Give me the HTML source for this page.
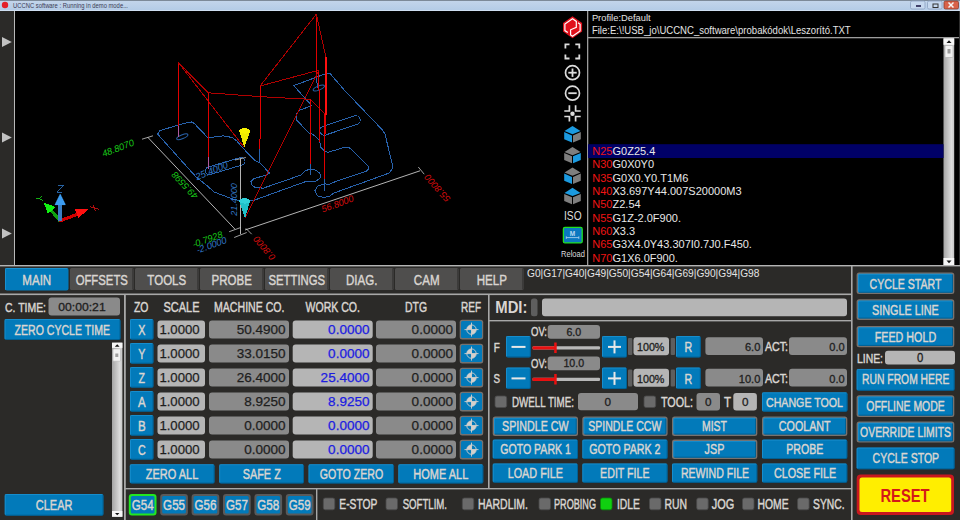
<!DOCTYPE html><html><head><meta charset="utf-8"><style>html,body{margin:0;padding:0;width:960px;height:520px;overflow:hidden;background:#2b2a28}svg{display:block}</style></head><body><svg width="960" height="520" viewBox="0 0 960 520" font-family="&quot;Liberation Sans&quot;, sans-serif" shape-rendering="auto">
<rect x="0.00" y="0.00" width="960.00" height="520.00" rx="0.00" fill="#2b2a28"/>
<defs><linearGradient id="tb" x1="0" y1="0" x2="0" y2="1"><stop offset="0" stop-color="#c4d6ec"/><stop offset="1" stop-color="#b3cbe6"/></linearGradient><linearGradient id="sb" x1="0" y1="0" x2="1" y2="0"><stop offset="0" stop-color="#a4a4a4"/><stop offset=".75" stop-color="#dcdcdc"/><stop offset="1" stop-color="#c4c4c4"/></linearGradient></defs>
<rect x="0.00" y="0.00" width="960.00" height="11.00" rx="0.00" fill="url(#tb)"/>
<rect x="0.00" y="0.00" width="960.00" height="1.00" rx="0.00" fill="#7d8a99"/>
<rect x="0.00" y="10.00" width="960.00" height="1.00" rx="0.00" fill="#cfdff2"/>
<circle cx="5" cy="5" r="3.2" fill="#e32029"/>
<text x="13.00" y="7.90" font-size="7.27" font-weight="normal" fill="#3b3b55" textLength="115.00" lengthAdjust="spacingAndGlyphs">UCCNC software : Running in demo mode...</text>
<rect x="910.50" y="1.00" width="14.50" height="8.00" rx="1.50" fill="#c6d8ee" stroke="#8aa0bf" stroke-width=".8"/>
<rect x="927.50" y="1.00" width="14.50" height="8.00" rx="1.50" fill="#c6d8ee" stroke="#8aa0bf" stroke-width=".8"/>
<rect x="916.00" y="5.00" width="5.00" height="2.00" rx="0.00" fill="#40406a"/>
<rect x="933.00" y="4.00" width="5.00" height="3.50" rx="0.00" fill="none" stroke="#333" stroke-width="1"/>
<rect x="944.00" y="1.00" width="14.50" height="8.00" rx="1.50" fill="#d9624a" stroke="#8a3a2a" stroke-width=".8"/>
<line x1="948.50" y1="2.50" x2="953.50" y2="7.50" stroke="#f4f4f4" stroke-width="1.50"/>
<line x1="953.50" y1="2.50" x2="948.50" y2="7.50" stroke="#f4f4f4" stroke-width="1.50"/>
<rect x="0.00" y="11.00" width="14.00" height="254.00" rx="0.00" fill="#2b2a28"/>
<rect x="15.00" y="11.00" width="945.00" height="254.00" rx="0.00" fill="#000"/>
<rect x="14.00" y="11.00" width="1.00" height="254.00" rx="0.00" fill="#b8b8b8"/>
<path d="M2 37.0L11.8 42.0L2 47.0Z" fill="#c2c2c2"/>
<path d="M2 132.5L11.8 137.5L2 142.5Z" fill="#c2c2c2"/>
<path d="M2 228.5L11.8 233.5L2 238.5Z" fill="#c2c2c2"/>
<rect x="587.00" y="11.00" width="1.30" height="254.00" rx="0.00" fill="#9c9c9c"/>
<rect x="588.00" y="37.00" width="371.00" height="1.30" rx="0.00" fill="#9c9c9c"/>
<rect x="959.00" y="11.00" width="1.00" height="254.00" rx="0.00" fill="#2e2e2e"/>
<rect x="0.00" y="265.00" width="960.00" height="1.40" rx="0.00" fill="#b4b4b4"/>
<rect x="0.00" y="293.50" width="851.00" height="1.60" rx="0.00" fill="#a8a8a8"/>
<rect x="851.00" y="266.00" width="1.60" height="254.00" rx="0.00" fill="#a8a8a8"/>
<rect x="124.00" y="295.00" width="1.80" height="225.00" rx="0.00" fill="#a8a8a8"/>
<rect x="488.00" y="295.00" width="1.60" height="194.00" rx="0.00" fill="#a8a8a8"/>
<rect x="489.00" y="320.00" width="362.00" height="1.40" rx="0.00" fill="#a8a8a8"/>
<rect x="125.00" y="488.00" width="726.00" height="1.40" rx="0.00" fill="#a8a8a8"/>
<rect x="316.00" y="489.00" width="1.40" height="31.00" rx="0.00" fill="#a8a8a8"/>
<rect x="5.00" y="268.00" width="63.50" height="22.50" rx="2.00" fill="#027aba"/>
<path d="M5.50 290V268.5H67.50" stroke="#2aa0e0" stroke-width="1" fill="none" opacity=".6"/>
<text x="22.28" y="284.80" font-size="15.41" font-weight="normal" fill="#d9d5d1" textLength="28.93" lengthAdjust="spacingAndGlyphs" stroke="#d9d5d1" stroke-width=".45">MAIN</text>
<rect x="70.00" y="268.00" width="63.50" height="22.00" rx="1.50" fill="#4f4e4d"/>
<rect x="132.00" y="268.50" width="1.50" height="21.00" rx="0.00" fill="#3c3b3a"/>
<text x="75.65" y="284.80" font-size="15.41" font-weight="normal" fill="#d9d5d1" textLength="52.22" lengthAdjust="spacingAndGlyphs" stroke="#d9d5d1" stroke-width=".45">OFFSETS</text>
<rect x="135.00" y="268.00" width="63.50" height="22.00" rx="1.50" fill="#4f4e4d"/>
<rect x="197.00" y="268.50" width="1.50" height="21.00" rx="0.00" fill="#3c3b3a"/>
<text x="147.36" y="284.80" font-size="15.41" font-weight="normal" fill="#d9d5d1" textLength="38.80" lengthAdjust="spacingAndGlyphs" stroke="#d9d5d1" stroke-width=".45">TOOLS</text>
<rect x="200.00" y="268.00" width="63.50" height="22.00" rx="1.50" fill="#4f4e4d"/>
<rect x="262.00" y="268.50" width="1.50" height="21.00" rx="0.00" fill="#3c3b3a"/>
<text x="211.62" y="284.80" font-size="15.41" font-weight="normal" fill="#d9d5d1" textLength="40.27" lengthAdjust="spacingAndGlyphs" stroke="#d9d5d1" stroke-width=".45">PROBE</text>
<rect x="265.00" y="268.00" width="63.50" height="22.00" rx="1.50" fill="#4f4e4d"/>
<rect x="327.00" y="268.50" width="1.50" height="21.00" rx="0.00" fill="#3c3b3a"/>
<text x="268.44" y="284.80" font-size="15.41" font-weight="normal" fill="#d9d5d1" textLength="56.63" lengthAdjust="spacingAndGlyphs" stroke="#d9d5d1" stroke-width=".45">SETTINGS</text>
<rect x="330.00" y="268.00" width="63.50" height="22.00" rx="1.50" fill="#4f4e4d"/>
<rect x="392.00" y="268.50" width="1.50" height="21.00" rx="0.00" fill="#3c3b3a"/>
<text x="346.01" y="284.80" font-size="15.41" font-weight="normal" fill="#d9d5d1" textLength="31.45" lengthAdjust="spacingAndGlyphs" stroke="#d9d5d1" stroke-width=".45">DIAG.</text>
<rect x="395.00" y="268.00" width="63.50" height="22.00" rx="1.50" fill="#4f4e4d"/>
<rect x="457.00" y="268.50" width="1.50" height="21.00" rx="0.00" fill="#3c3b3a"/>
<text x="413.87" y="284.80" font-size="15.41" font-weight="normal" fill="#d9d5d1" textLength="25.79" lengthAdjust="spacingAndGlyphs" stroke="#d9d5d1" stroke-width=".45">CAM</text>
<rect x="460.00" y="268.00" width="63.50" height="22.00" rx="1.50" fill="#4f4e4d"/>
<rect x="522.00" y="268.50" width="1.50" height="21.00" rx="0.00" fill="#3c3b3a"/>
<text x="476.66" y="284.80" font-size="15.41" font-weight="normal" fill="#d9d5d1" textLength="30.21" lengthAdjust="spacingAndGlyphs" stroke="#d9d5d1" stroke-width=".45">HELP</text>
<text x="527.00" y="276.80" font-size="10.17" font-weight="normal" fill="#e4e4e4" textLength="232.38" lengthAdjust="spacingAndGlyphs">G0|G17|G40|G49|G50|G54|G64|G69|G90|G94|G98</text>
<text x="5.00" y="311.50" font-size="13.08" font-weight="normal" fill="#d9d5d1" textLength="41.01" lengthAdjust="spacingAndGlyphs" stroke="#d9d5d1" stroke-width=".45">C. TIME:</text>
<rect x="48.50" y="297.50" width="71.50" height="18.00" rx="3.00" fill="#8a8a8a"/>
<text x="58.30" y="310.80" font-size="11.63" font-weight="normal" fill="#1e1e1e" textLength="47.37" lengthAdjust="spacingAndGlyphs" stroke="#1e1e1e" stroke-width=".3">00:00:21</text>
<rect x="4.50" y="319.00" width="116.00" height="21.00" rx="2.00" fill="#027aba"/>
<path d="M5.00 339.00V319.50H119.50" stroke="#2aa0e0" stroke-width="1" fill="none" opacity=".5"/>
<path d="M5.50 339.50H120.00V320.00" stroke="#01507c" stroke-width="1" fill="none" opacity=".6"/>
<text x="14.60" y="334.50" font-size="13.81" font-weight="normal" fill="#d9d5d1" textLength="95.39" lengthAdjust="spacingAndGlyphs" stroke="#d9d5d1" stroke-width=".45">ZERO CYCLE TIME</text>
<rect x="112.00" y="342.70" width="10.40" height="174.00" rx="0.00" fill="url(#sb)"/>
<rect x="112.00" y="342.70" width="10.40" height="5.20" rx="0.00" fill="#f6f6f6"/>
<path d="M114.8 346.8L117.2 344.3L119.6 346.8Z" fill="#111"/>
<rect x="113.00" y="348.90" width="7.60" height="12.30" rx="0.80" fill="#f2f2f2" stroke="#b4b4b4" stroke-width=".6"/>
<rect x="115.30" y="353.50" width="3.00" height="3.50" rx="0.00" fill="#a0a0a0"/>
<rect x="112.00" y="511.00" width="10.40" height="5.80" rx="0.00" fill="#f6f6f6"/>
<path d="M115 513L117.2 515.3L119.4 513Z" fill="#111"/>
<rect x="4.70" y="494.00" width="98.80" height="21.70" rx="2.00" fill="#027aba"/>
<path d="M5.20 514.70V494.50H102.50" stroke="#2aa0e0" stroke-width="1" fill="none" opacity=".5"/>
<path d="M5.70 515.20H103.00V495.00" stroke="#01507c" stroke-width="1" fill="none" opacity=".6"/>
<text x="35.79" y="510.40" font-size="13.81" font-weight="normal" fill="#d9d5d1" textLength="36.62" lengthAdjust="spacingAndGlyphs" stroke="#d9d5d1" stroke-width=".45">CLEAR</text>
<text x="134.00" y="312.00" font-size="13.81" font-weight="normal" fill="#d9d5d1" textLength="14.49" lengthAdjust="spacingAndGlyphs" stroke="#d9d5d1" stroke-width=".45">ZO</text>
<text x="163.50" y="312.00" font-size="13.81" font-weight="normal" fill="#d9d5d1" textLength="35.99" lengthAdjust="spacingAndGlyphs" stroke="#d9d5d1" stroke-width=".45">SCALE</text>
<text x="214.00" y="312.00" font-size="13.81" font-weight="normal" fill="#d9d5d1" textLength="70.52" lengthAdjust="spacingAndGlyphs" stroke="#d9d5d1" stroke-width=".45">MACHINE CO.</text>
<text x="305.50" y="312.00" font-size="13.81" font-weight="normal" fill="#d9d5d1" textLength="54.52" lengthAdjust="spacingAndGlyphs" stroke="#d9d5d1" stroke-width=".45">WORK CO.</text>
<text x="405.00" y="312.00" font-size="13.81" font-weight="normal" fill="#d9d5d1" textLength="22.01" lengthAdjust="spacingAndGlyphs" stroke="#d9d5d1" stroke-width=".45">DTG</text>
<text x="461.00" y="312.00" font-size="13.81" font-weight="normal" fill="#d9d5d1" textLength="20.00" lengthAdjust="spacingAndGlyphs" stroke="#d9d5d1" stroke-width=".45">REF</text>
<rect x="130.00" y="319.00" width="23.50" height="20.70" rx="2.00" fill="#027aba"/>
<path d="M130.50 338.70V319.50H152.50" stroke="#2aa0e0" stroke-width="1" fill="none" opacity=".5"/>
<path d="M131.00 339.20H153.00V320.00" stroke="#01507c" stroke-width="1" fill="none" opacity=".6"/>
<text x="138.21" y="334.90" font-size="13.81" font-weight="normal" fill="#d9d5d1" textLength="7.09" lengthAdjust="spacingAndGlyphs" stroke="#d9d5d1" stroke-width=".45">X</text>
<rect x="157.50" y="320.50" width="47.50" height="18.00" rx="3.00" fill="#b5b5b5"/>
<text x="159.40" y="334.30" font-size="13.08" font-weight="normal" fill="#1e1e1e" textLength="40.28" lengthAdjust="spacingAndGlyphs" stroke="#1e1e1e" stroke-width=".25">1.0000</text>
<rect x="209.00" y="320.50" width="80.00" height="18.00" rx="3.00" fill="#8a8a8a"/>
<text x="236.73" y="334.30" font-size="13.08" font-weight="normal" fill="#1e1e1e" textLength="48.86" lengthAdjust="spacingAndGlyphs" stroke="#1e1e1e" stroke-width=".25">50.4900</text>
<rect x="292.70" y="320.50" width="80.00" height="18.00" rx="3.00" fill="#b5b5b5"/>
<text x="328.14" y="334.30" font-size="13.08" font-weight="normal" fill="#1c1ce0" textLength="41.35" lengthAdjust="spacingAndGlyphs" stroke="#1c1ce0" stroke-width=".25">0.0000</text>
<rect x="376.00" y="320.50" width="80.00" height="18.00" rx="3.00" fill="#8a8a8a"/>
<text x="411.64" y="334.30" font-size="13.08" font-weight="normal" fill="#1e1e1e" textLength="41.35" lengthAdjust="spacingAndGlyphs" stroke="#1e1e1e" stroke-width=".25">0.0000</text>
<rect x="459.70" y="319.70" width="23.50" height="19.70" rx="2.50" fill="#747270"/>
<rect x="461.00" y="321.00" width="21.00" height="17.00" rx="1.50" fill="#027aba"/>
<circle cx="471.5" cy="329.6" r="4.7" fill="none" stroke="#d4d0cc" stroke-width=".9"/>
<path d="M471.5 329.6h4.7a4.7 4.7 0 0 1 -4.7 4.7z M471.5 329.6h-4.7a4.7 4.7 0 0 1 4.7 -4.7z" fill="#d4d0cc"/>
<line x1="464.50" y1="329.60" x2="478.50" y2="329.60" stroke="#d4d0cc" stroke-width="0.90"/>
<line x1="471.50" y1="322.60" x2="471.50" y2="336.60" stroke="#d4d0cc" stroke-width="0.90"/>
<rect x="130.00" y="343.00" width="23.50" height="20.70" rx="2.00" fill="#027aba"/>
<path d="M130.50 362.70V343.50H152.50" stroke="#2aa0e0" stroke-width="1" fill="none" opacity=".5"/>
<path d="M131.00 363.20H153.00V344.00" stroke="#01507c" stroke-width="1" fill="none" opacity=".6"/>
<text x="138.21" y="358.90" font-size="13.81" font-weight="normal" fill="#d9d5d1" textLength="7.09" lengthAdjust="spacingAndGlyphs" stroke="#d9d5d1" stroke-width=".45">Y</text>
<rect x="157.50" y="344.50" width="47.50" height="18.00" rx="3.00" fill="#b5b5b5"/>
<text x="159.40" y="358.30" font-size="13.08" font-weight="normal" fill="#1e1e1e" textLength="40.28" lengthAdjust="spacingAndGlyphs" stroke="#1e1e1e" stroke-width=".25">1.0000</text>
<rect x="209.00" y="344.50" width="80.00" height="18.00" rx="3.00" fill="#8a8a8a"/>
<text x="236.73" y="358.30" font-size="13.08" font-weight="normal" fill="#1e1e1e" textLength="48.86" lengthAdjust="spacingAndGlyphs" stroke="#1e1e1e" stroke-width=".25">33.0150</text>
<rect x="292.70" y="344.50" width="80.00" height="18.00" rx="3.00" fill="#b5b5b5"/>
<text x="328.14" y="358.30" font-size="13.08" font-weight="normal" fill="#1c1ce0" textLength="41.35" lengthAdjust="spacingAndGlyphs" stroke="#1c1ce0" stroke-width=".25">0.0000</text>
<rect x="376.00" y="344.50" width="80.00" height="18.00" rx="3.00" fill="#8a8a8a"/>
<text x="411.64" y="358.30" font-size="13.08" font-weight="normal" fill="#1e1e1e" textLength="41.35" lengthAdjust="spacingAndGlyphs" stroke="#1e1e1e" stroke-width=".25">0.0000</text>
<rect x="459.70" y="343.70" width="23.50" height="19.70" rx="2.50" fill="#747270"/>
<rect x="461.00" y="345.00" width="21.00" height="17.00" rx="1.50" fill="#027aba"/>
<circle cx="471.5" cy="353.6" r="4.7" fill="none" stroke="#d4d0cc" stroke-width=".9"/>
<path d="M471.5 353.6h4.7a4.7 4.7 0 0 1 -4.7 4.7z M471.5 353.6h-4.7a4.7 4.7 0 0 1 4.7 -4.7z" fill="#d4d0cc"/>
<line x1="464.50" y1="353.60" x2="478.50" y2="353.60" stroke="#d4d0cc" stroke-width="0.90"/>
<line x1="471.50" y1="346.60" x2="471.50" y2="360.60" stroke="#d4d0cc" stroke-width="0.90"/>
<rect x="130.00" y="367.00" width="23.50" height="20.70" rx="2.00" fill="#027aba"/>
<path d="M130.50 386.70V367.50H152.50" stroke="#2aa0e0" stroke-width="1" fill="none" opacity=".5"/>
<path d="M131.00 387.20H153.00V368.00" stroke="#01507c" stroke-width="1" fill="none" opacity=".6"/>
<text x="138.51" y="382.90" font-size="13.81" font-weight="normal" fill="#d9d5d1" textLength="6.49" lengthAdjust="spacingAndGlyphs" stroke="#d9d5d1" stroke-width=".45">Z</text>
<rect x="157.50" y="368.50" width="47.50" height="18.00" rx="3.00" fill="#b5b5b5"/>
<text x="159.40" y="382.30" font-size="13.08" font-weight="normal" fill="#1e1e1e" textLength="40.28" lengthAdjust="spacingAndGlyphs" stroke="#1e1e1e" stroke-width=".25">1.0000</text>
<rect x="209.00" y="368.50" width="80.00" height="18.00" rx="3.00" fill="#8a8a8a"/>
<text x="236.73" y="382.30" font-size="13.08" font-weight="normal" fill="#1e1e1e" textLength="48.86" lengthAdjust="spacingAndGlyphs" stroke="#1e1e1e" stroke-width=".25">26.4000</text>
<rect x="292.70" y="368.50" width="80.00" height="18.00" rx="3.00" fill="#b5b5b5"/>
<text x="320.63" y="382.30" font-size="13.08" font-weight="normal" fill="#1c1ce0" textLength="48.86" lengthAdjust="spacingAndGlyphs" stroke="#1c1ce0" stroke-width=".25">25.4000</text>
<rect x="376.00" y="368.50" width="80.00" height="18.00" rx="3.00" fill="#8a8a8a"/>
<text x="411.64" y="382.30" font-size="13.08" font-weight="normal" fill="#1e1e1e" textLength="41.35" lengthAdjust="spacingAndGlyphs" stroke="#1e1e1e" stroke-width=".25">0.0000</text>
<rect x="459.70" y="367.70" width="23.50" height="19.70" rx="2.50" fill="#747270"/>
<rect x="461.00" y="369.00" width="21.00" height="17.00" rx="1.50" fill="#027aba"/>
<circle cx="471.5" cy="377.6" r="4.7" fill="none" stroke="#d4d0cc" stroke-width=".9"/>
<path d="M471.5 377.6h4.7a4.7 4.7 0 0 1 -4.7 4.7z M471.5 377.6h-4.7a4.7 4.7 0 0 1 4.7 -4.7z" fill="#d4d0cc"/>
<line x1="464.50" y1="377.60" x2="478.50" y2="377.60" stroke="#d4d0cc" stroke-width="0.90"/>
<line x1="471.50" y1="370.60" x2="471.50" y2="384.60" stroke="#d4d0cc" stroke-width="0.90"/>
<rect x="130.00" y="391.00" width="23.50" height="20.70" rx="2.00" fill="#027aba"/>
<path d="M130.50 410.70V391.50H152.50" stroke="#2aa0e0" stroke-width="1" fill="none" opacity=".5"/>
<path d="M131.00 411.20H153.00V392.00" stroke="#01507c" stroke-width="1" fill="none" opacity=".6"/>
<text x="137.92" y="406.90" font-size="13.81" font-weight="normal" fill="#d9d5d1" textLength="7.62" lengthAdjust="spacingAndGlyphs" stroke="#d9d5d1" stroke-width=".45">A</text>
<rect x="157.50" y="392.50" width="47.50" height="18.00" rx="3.00" fill="#b5b5b5"/>
<text x="159.40" y="406.30" font-size="13.08" font-weight="normal" fill="#1e1e1e" textLength="40.28" lengthAdjust="spacingAndGlyphs" stroke="#1e1e1e" stroke-width=".25">1.0000</text>
<rect x="209.00" y="392.50" width="80.00" height="18.00" rx="3.00" fill="#8a8a8a"/>
<text x="244.24" y="406.30" font-size="13.08" font-weight="normal" fill="#1e1e1e" textLength="41.35" lengthAdjust="spacingAndGlyphs" stroke="#1e1e1e" stroke-width=".25">8.9250</text>
<rect x="292.70" y="392.50" width="80.00" height="18.00" rx="3.00" fill="#b5b5b5"/>
<text x="328.14" y="406.30" font-size="13.08" font-weight="normal" fill="#1c1ce0" textLength="41.35" lengthAdjust="spacingAndGlyphs" stroke="#1c1ce0" stroke-width=".25">8.9250</text>
<rect x="376.00" y="392.50" width="80.00" height="18.00" rx="3.00" fill="#8a8a8a"/>
<text x="411.64" y="406.30" font-size="13.08" font-weight="normal" fill="#1e1e1e" textLength="41.35" lengthAdjust="spacingAndGlyphs" stroke="#1e1e1e" stroke-width=".25">0.0000</text>
<rect x="459.70" y="391.70" width="23.50" height="19.70" rx="2.50" fill="#747270"/>
<rect x="461.00" y="393.00" width="21.00" height="17.00" rx="1.50" fill="#027aba"/>
<circle cx="471.5" cy="401.6" r="4.7" fill="none" stroke="#d4d0cc" stroke-width=".9"/>
<path d="M471.5 401.6h4.7a4.7 4.7 0 0 1 -4.7 4.7z M471.5 401.6h-4.7a4.7 4.7 0 0 1 4.7 -4.7z" fill="#d4d0cc"/>
<line x1="464.50" y1="401.60" x2="478.50" y2="401.60" stroke="#d4d0cc" stroke-width="0.90"/>
<line x1="471.50" y1="394.60" x2="471.50" y2="408.60" stroke="#d4d0cc" stroke-width="0.90"/>
<rect x="130.00" y="415.00" width="23.50" height="20.70" rx="2.00" fill="#027aba"/>
<path d="M130.50 434.70V415.50H152.50" stroke="#2aa0e0" stroke-width="1" fill="none" opacity=".5"/>
<path d="M131.00 435.20H153.00V416.00" stroke="#01507c" stroke-width="1" fill="none" opacity=".6"/>
<text x="137.92" y="430.90" font-size="13.81" font-weight="normal" fill="#d9d5d1" textLength="7.68" lengthAdjust="spacingAndGlyphs" stroke="#d9d5d1" stroke-width=".45">B</text>
<rect x="157.50" y="416.50" width="47.50" height="18.00" rx="3.00" fill="#b5b5b5"/>
<text x="159.40" y="430.30" font-size="13.08" font-weight="normal" fill="#1e1e1e" textLength="40.28" lengthAdjust="spacingAndGlyphs" stroke="#1e1e1e" stroke-width=".25">1.0000</text>
<rect x="209.00" y="416.50" width="80.00" height="18.00" rx="3.00" fill="#8a8a8a"/>
<text x="244.24" y="430.30" font-size="13.08" font-weight="normal" fill="#1e1e1e" textLength="41.35" lengthAdjust="spacingAndGlyphs" stroke="#1e1e1e" stroke-width=".25">0.0000</text>
<rect x="292.70" y="416.50" width="80.00" height="18.00" rx="3.00" fill="#b5b5b5"/>
<text x="328.14" y="430.30" font-size="13.08" font-weight="normal" fill="#1c1ce0" textLength="41.35" lengthAdjust="spacingAndGlyphs" stroke="#1c1ce0" stroke-width=".25">0.0000</text>
<rect x="376.00" y="416.50" width="80.00" height="18.00" rx="3.00" fill="#8a8a8a"/>
<text x="411.64" y="430.30" font-size="13.08" font-weight="normal" fill="#1e1e1e" textLength="41.35" lengthAdjust="spacingAndGlyphs" stroke="#1e1e1e" stroke-width=".25">0.0000</text>
<rect x="459.70" y="415.70" width="23.50" height="19.70" rx="2.50" fill="#747270"/>
<rect x="461.00" y="417.00" width="21.00" height="17.00" rx="1.50" fill="#027aba"/>
<circle cx="471.5" cy="425.6" r="4.7" fill="none" stroke="#d4d0cc" stroke-width=".9"/>
<path d="M471.5 425.6h4.7a4.7 4.7 0 0 1 -4.7 4.7z M471.5 425.6h-4.7a4.7 4.7 0 0 1 4.7 -4.7z" fill="#d4d0cc"/>
<line x1="464.50" y1="425.60" x2="478.50" y2="425.60" stroke="#d4d0cc" stroke-width="0.90"/>
<line x1="471.50" y1="418.60" x2="471.50" y2="432.60" stroke="#d4d0cc" stroke-width="0.90"/>
<rect x="130.00" y="439.00" width="23.50" height="20.70" rx="2.00" fill="#027aba"/>
<path d="M130.50 458.70V439.50H152.50" stroke="#2aa0e0" stroke-width="1" fill="none" opacity=".5"/>
<path d="M131.00 459.20H153.00V440.00" stroke="#01507c" stroke-width="1" fill="none" opacity=".6"/>
<text x="137.92" y="454.90" font-size="13.81" font-weight="normal" fill="#d9d5d1" textLength="7.68" lengthAdjust="spacingAndGlyphs" stroke="#d9d5d1" stroke-width=".45">C</text>
<rect x="157.50" y="440.50" width="47.50" height="18.00" rx="3.00" fill="#b5b5b5"/>
<text x="159.40" y="454.30" font-size="13.08" font-weight="normal" fill="#1e1e1e" textLength="40.28" lengthAdjust="spacingAndGlyphs" stroke="#1e1e1e" stroke-width=".25">1.0000</text>
<rect x="209.00" y="440.50" width="80.00" height="18.00" rx="3.00" fill="#8a8a8a"/>
<text x="244.24" y="454.30" font-size="13.08" font-weight="normal" fill="#1e1e1e" textLength="41.35" lengthAdjust="spacingAndGlyphs" stroke="#1e1e1e" stroke-width=".25">0.0000</text>
<rect x="292.70" y="440.50" width="80.00" height="18.00" rx="3.00" fill="#b5b5b5"/>
<text x="328.14" y="454.30" font-size="13.08" font-weight="normal" fill="#1c1ce0" textLength="41.35" lengthAdjust="spacingAndGlyphs" stroke="#1c1ce0" stroke-width=".25">0.0000</text>
<rect x="376.00" y="440.50" width="80.00" height="18.00" rx="3.00" fill="#8a8a8a"/>
<text x="411.64" y="454.30" font-size="13.08" font-weight="normal" fill="#1e1e1e" textLength="41.35" lengthAdjust="spacingAndGlyphs" stroke="#1e1e1e" stroke-width=".25">0.0000</text>
<rect x="459.70" y="439.70" width="23.50" height="19.70" rx="2.50" fill="#747270"/>
<rect x="461.00" y="441.00" width="21.00" height="17.00" rx="1.50" fill="#027aba"/>
<circle cx="471.5" cy="449.6" r="4.7" fill="none" stroke="#d4d0cc" stroke-width=".9"/>
<path d="M471.5 449.6h4.7a4.7 4.7 0 0 1 -4.7 4.7z M471.5 449.6h-4.7a4.7 4.7 0 0 1 4.7 -4.7z" fill="#d4d0cc"/>
<line x1="464.50" y1="449.60" x2="478.50" y2="449.60" stroke="#d4d0cc" stroke-width="0.90"/>
<line x1="471.50" y1="442.60" x2="471.50" y2="456.60" stroke="#d4d0cc" stroke-width="0.90"/>
<rect x="129.80" y="464.20" width="84.80" height="19.40" rx="2.00" fill="#027aba"/>
<path d="M130.30 482.60V464.70H213.60" stroke="#2aa0e0" stroke-width="1" fill="none" opacity=".5"/>
<path d="M130.80 483.10H214.10V465.20" stroke="#01507c" stroke-width="1" fill="none" opacity=".6"/>
<text x="145.80" y="478.90" font-size="13.81" font-weight="normal" fill="#d9d5d1" textLength="52.50" lengthAdjust="spacingAndGlyphs" stroke="#d9d5d1" stroke-width=".45">ZERO ALL</text>
<rect x="219.20" y="464.20" width="84.80" height="19.40" rx="2.00" fill="#027aba"/>
<path d="M219.70 482.60V464.70H303.00" stroke="#2aa0e0" stroke-width="1" fill="none" opacity=".5"/>
<path d="M220.20 483.10H303.50V465.20" stroke="#01507c" stroke-width="1" fill="none" opacity=".6"/>
<text x="242.70" y="478.90" font-size="13.81" font-weight="normal" fill="#d9d5d1" textLength="38.11" lengthAdjust="spacingAndGlyphs" stroke="#d9d5d1" stroke-width=".45">SAFE Z</text>
<rect x="308.50" y="464.20" width="85.50" height="19.40" rx="2.00" fill="#027aba"/>
<path d="M309.00 482.60V464.70H393.00" stroke="#2aa0e0" stroke-width="1" fill="none" opacity=".5"/>
<path d="M309.50 483.10H393.50V465.20" stroke="#01507c" stroke-width="1" fill="none" opacity=".6"/>
<text x="319.80" y="478.90" font-size="13.81" font-weight="normal" fill="#d9d5d1" textLength="63.42" lengthAdjust="spacingAndGlyphs" stroke="#d9d5d1" stroke-width=".45">GOTO ZERO</text>
<rect x="398.30" y="464.20" width="85.00" height="19.40" rx="2.00" fill="#027aba"/>
<path d="M398.80 482.60V464.70H482.30" stroke="#2aa0e0" stroke-width="1" fill="none" opacity=".5"/>
<path d="M399.30 483.10H482.80V465.20" stroke="#01507c" stroke-width="1" fill="none" opacity=".6"/>
<text x="413.30" y="478.90" font-size="13.81" font-weight="normal" fill="#d9d5d1" textLength="55.02" lengthAdjust="spacingAndGlyphs" stroke="#d9d5d1" stroke-width=".45">HOME ALL</text>
<rect x="128.80" y="494.00" width="27.70" height="21.50" rx="3.00" fill="#22e622"/>
<rect x="130.80" y="496.00" width="23.70" height="17.50" rx="1.50" fill="#027aba"/>
<text x="131.71" y="510.00" font-size="14.54" font-weight="normal" fill="#d9d5d1" textLength="21.98" lengthAdjust="spacingAndGlyphs" stroke="#d9d5d1" stroke-width=".45">G54</text>
<rect x="160.20" y="494.00" width="27.70" height="21.50" rx="3.00" fill="#5a5a5a"/>
<rect x="162.20" y="496.00" width="23.70" height="17.50" rx="1.50" fill="#027aba"/>
<text x="163.11" y="510.00" font-size="14.54" font-weight="normal" fill="#d9d5d1" textLength="21.98" lengthAdjust="spacingAndGlyphs" stroke="#d9d5d1" stroke-width=".45">G55</text>
<rect x="191.60" y="494.00" width="27.70" height="21.50" rx="3.00" fill="#5a5a5a"/>
<rect x="193.60" y="496.00" width="23.70" height="17.50" rx="1.50" fill="#027aba"/>
<text x="194.51" y="510.00" font-size="14.54" font-weight="normal" fill="#d9d5d1" textLength="21.98" lengthAdjust="spacingAndGlyphs" stroke="#d9d5d1" stroke-width=".45">G56</text>
<rect x="223.00" y="494.00" width="27.70" height="21.50" rx="3.00" fill="#5a5a5a"/>
<rect x="225.00" y="496.00" width="23.70" height="17.50" rx="1.50" fill="#027aba"/>
<text x="225.91" y="510.00" font-size="14.54" font-weight="normal" fill="#d9d5d1" textLength="21.98" lengthAdjust="spacingAndGlyphs" stroke="#d9d5d1" stroke-width=".45">G57</text>
<rect x="254.40" y="494.00" width="27.70" height="21.50" rx="3.00" fill="#5a5a5a"/>
<rect x="256.40" y="496.00" width="23.70" height="17.50" rx="1.50" fill="#027aba"/>
<text x="257.31" y="510.00" font-size="14.54" font-weight="normal" fill="#d9d5d1" textLength="21.98" lengthAdjust="spacingAndGlyphs" stroke="#d9d5d1" stroke-width=".45">G58</text>
<rect x="285.80" y="494.00" width="27.70" height="21.50" rx="3.00" fill="#5a5a5a"/>
<rect x="287.80" y="496.00" width="23.70" height="17.50" rx="1.50" fill="#027aba"/>
<text x="288.71" y="510.00" font-size="14.54" font-weight="normal" fill="#d9d5d1" textLength="21.98" lengthAdjust="spacingAndGlyphs" stroke="#d9d5d1" stroke-width=".45">G59</text>
<rect x="323.30" y="498.00" width="11.50" height="11.80" rx="2.00" fill="#6a6a6a" stroke="#4a4a4a" stroke-width=".8"/>
<text x="339.30" y="509.00" font-size="13.81" font-weight="normal" fill="#d9d5d1" textLength="38.00" lengthAdjust="spacingAndGlyphs" stroke="#d9d5d1" stroke-width=".45">E-STOP</text>
<rect x="386.00" y="498.00" width="11.50" height="11.80" rx="2.00" fill="#6a6a6a" stroke="#4a4a4a" stroke-width=".8"/>
<text x="402.70" y="509.00" font-size="13.81" font-weight="normal" fill="#d9d5d1" textLength="44.31" lengthAdjust="spacingAndGlyphs" stroke="#d9d5d1" stroke-width=".45">SOFTLIM.</text>
<rect x="462.30" y="498.00" width="11.50" height="11.80" rx="2.00" fill="#6a6a6a" stroke="#4a4a4a" stroke-width=".8"/>
<text x="478.00" y="509.00" font-size="13.81" font-weight="normal" fill="#d9d5d1" textLength="49.98" lengthAdjust="spacingAndGlyphs" stroke="#d9d5d1" stroke-width=".45">HARDLIM.</text>
<rect x="539.00" y="498.00" width="11.50" height="11.80" rx="2.00" fill="#6a6a6a" stroke="#4a4a4a" stroke-width=".8"/>
<text x="554.00" y="509.00" font-size="13.81" font-weight="normal" fill="#d9d5d1" textLength="42.02" lengthAdjust="spacingAndGlyphs" stroke="#d9d5d1" stroke-width=".45">PROBING</text>
<rect x="600.50" y="498.00" width="11.50" height="11.80" rx="2.00" fill="#10d010" stroke="#0a8a0a" stroke-width=".8"/>
<text x="617.00" y="509.00" font-size="13.81" font-weight="normal" fill="#d9d5d1" textLength="22.98" lengthAdjust="spacingAndGlyphs" stroke="#d9d5d1" stroke-width=".45">IDLE</text>
<rect x="649.50" y="498.00" width="11.50" height="11.80" rx="2.00" fill="#6a6a6a" stroke="#4a4a4a" stroke-width=".8"/>
<text x="664.50" y="509.00" font-size="13.81" font-weight="normal" fill="#d9d5d1" textLength="22.52" lengthAdjust="spacingAndGlyphs" stroke="#d9d5d1" stroke-width=".45">RUN</text>
<rect x="696.70" y="498.00" width="11.50" height="11.80" rx="2.00" fill="#6a6a6a" stroke="#4a4a4a" stroke-width=".8"/>
<text x="711.70" y="509.00" font-size="13.81" font-weight="normal" fill="#d9d5d1" textLength="22.51" lengthAdjust="spacingAndGlyphs" stroke="#d9d5d1" stroke-width=".45">JOG</text>
<rect x="742.50" y="498.00" width="11.50" height="11.80" rx="2.00" fill="#6a6a6a" stroke="#4a4a4a" stroke-width=".8"/>
<text x="757.50" y="509.00" font-size="13.81" font-weight="normal" fill="#d9d5d1" textLength="31.10" lengthAdjust="spacingAndGlyphs" stroke="#d9d5d1" stroke-width=".45">HOME</text>
<rect x="797.60" y="498.00" width="11.50" height="11.80" rx="2.00" fill="#6a6a6a" stroke="#4a4a4a" stroke-width=".8"/>
<text x="813.00" y="509.00" font-size="13.81" font-weight="normal" fill="#d9d5d1" textLength="31.51" lengthAdjust="spacingAndGlyphs" stroke="#d9d5d1" stroke-width=".45">SYNC.</text>
<text x="495.30" y="313.00" font-size="15.99" font-weight="bold" fill="#d9d5d1" textLength="32.12" lengthAdjust="spacingAndGlyphs">MDI:</text>
<rect x="531.00" y="298.50" width="6.50" height="17.70" rx="2.50" fill="#5e5e5e"/>
<rect x="542.00" y="298.50" width="305.00" height="17.70" rx="3.00" fill="#b5b5b5"/>
<text x="493.80" y="351.50" font-size="12.21" font-weight="normal" fill="#d9d5d1" textLength="6.01" lengthAdjust="spacingAndGlyphs" stroke="#d9d5d1" stroke-width=".45">F</text>
<text x="531.00" y="336.00" font-size="12.35" font-weight="normal" fill="#d9d5d1" textLength="16.01" lengthAdjust="spacingAndGlyphs" stroke="#d9d5d1" stroke-width=".45">OV:</text>
<rect x="547.70" y="325.00" width="52.30" height="13.80" rx="3.00" fill="#8a8a8a"/>
<text x="566.43" y="335.80" font-size="10.61" font-weight="normal" fill="#1e1e1e" textLength="14.75" lengthAdjust="spacingAndGlyphs" stroke="#1e1e1e" stroke-width=".3">6.0</text>
<rect x="506.00" y="336.00" width="24.80" height="21.40" rx="2.00" fill="#027aba"/>
<path d="M506.50 356.40V336.50H529.80" stroke="#2aa0e0" stroke-width="1" fill="none" opacity=".5"/>
<path d="M507.00 356.90H530.30V337.00" stroke="#01507c" stroke-width="1" fill="none" opacity=".6"/>
<rect x="511.50" y="345.90" width="14.00" height="2.00" rx="0.00" fill="#e8e8e8"/>
<rect x="532.60" y="346.30" width="67.40" height="3.20" rx="1.00" fill="#b8b8b8"/>
<rect x="532.60" y="346.30" width="22.50" height="3.20" rx="0.00" fill="#e81010"/>
<rect x="554.20" y="342.50" width="2.50" height="10.50" rx="0.00" fill="#e81010"/>
<rect x="602.00" y="336.00" width="25.00" height="21.60" rx="2.00" fill="#027aba"/>
<path d="M602.50 356.60V336.50H626.00" stroke="#2aa0e0" stroke-width="1" fill="none" opacity=".5"/>
<path d="M603.00 357.10H626.50V337.00" stroke="#01507c" stroke-width="1" fill="none" opacity=".6"/>
<rect x="608.00" y="345.90" width="13.00" height="2.00" rx="0.00" fill="#e8e8e8"/>
<rect x="613.50" y="340.40" width="2.00" height="13.00" rx="0.00" fill="#e8e8e8"/>
<rect x="628.00" y="338.00" width="4.30" height="17.00" rx="1.00" fill="#5e5e5e"/>
<rect x="633.50" y="337.20" width="35.50" height="18.00" rx="3.00" fill="#b5b5b5"/>
<text x="636.93" y="351.00" font-size="10.76" font-weight="normal" fill="#1e1e1e" textLength="27.51" lengthAdjust="spacingAndGlyphs" stroke="#1e1e1e" stroke-width=".3">100%</text>
<rect x="670.70" y="338.00" width="4.30" height="17.00" rx="1.00" fill="#5e5e5e"/>
<rect x="676.00" y="336.00" width="24.80" height="21.60" rx="2.00" fill="#027aba"/>
<path d="M676.50 356.60V336.50H699.80" stroke="#2aa0e0" stroke-width="1" fill="none" opacity=".5"/>
<path d="M677.00 357.10H700.30V337.00" stroke="#01507c" stroke-width="1" fill="none" opacity=".6"/>
<text x="684.57" y="352.35" font-size="13.81" font-weight="normal" fill="#d9d5d1" textLength="7.68" lengthAdjust="spacingAndGlyphs" stroke="#d9d5d1" stroke-width=".45">R</text>
<rect x="705.40" y="337.20" width="57.60" height="17.80" rx="3.00" fill="#8a8a8a"/>
<text x="744.95" y="351.00" font-size="11.05" font-weight="normal" fill="#1e1e1e" textLength="15.36" lengthAdjust="spacingAndGlyphs" stroke="#1e1e1e" stroke-width=".3">6.0</text>
<text x="765.00" y="351.30" font-size="12.06" font-weight="normal" fill="#d9d5d1" textLength="23.02" lengthAdjust="spacingAndGlyphs" stroke="#d9d5d1" stroke-width=".45">ACT:</text>
<rect x="789.00" y="337.20" width="58.00" height="17.80" rx="3.00" fill="#8a8a8a"/>
<text x="829.35" y="351.00" font-size="11.05" font-weight="normal" fill="#1e1e1e" textLength="15.36" lengthAdjust="spacingAndGlyphs" stroke="#1e1e1e" stroke-width=".3">0.0</text>
<text x="493.50" y="383.00" font-size="12.21" font-weight="normal" fill="#d9d5d1" textLength="6.52" lengthAdjust="spacingAndGlyphs" stroke="#d9d5d1" stroke-width=".45">S</text>
<text x="531.00" y="367.50" font-size="12.35" font-weight="normal" fill="#d9d5d1" textLength="16.01" lengthAdjust="spacingAndGlyphs" stroke="#d9d5d1" stroke-width=".45">OV:</text>
<rect x="547.70" y="356.50" width="52.30" height="13.80" rx="3.00" fill="#8a8a8a"/>
<text x="563.48" y="367.30" font-size="10.61" font-weight="normal" fill="#1e1e1e" textLength="20.65" lengthAdjust="spacingAndGlyphs" stroke="#1e1e1e" stroke-width=".3">10.0</text>
<rect x="506.00" y="367.50" width="24.80" height="21.40" rx="2.00" fill="#027aba"/>
<path d="M506.50 387.90V368.00H529.80" stroke="#2aa0e0" stroke-width="1" fill="none" opacity=".5"/>
<path d="M507.00 388.40H530.30V368.50" stroke="#01507c" stroke-width="1" fill="none" opacity=".6"/>
<rect x="511.50" y="377.40" width="14.00" height="2.00" rx="0.00" fill="#e8e8e8"/>
<rect x="532.60" y="377.80" width="67.40" height="3.20" rx="1.00" fill="#b8b8b8"/>
<rect x="532.60" y="377.80" width="22.50" height="3.20" rx="0.00" fill="#e81010"/>
<rect x="554.20" y="374.00" width="2.50" height="10.50" rx="0.00" fill="#e81010"/>
<rect x="602.00" y="367.50" width="25.00" height="21.60" rx="2.00" fill="#027aba"/>
<path d="M602.50 388.10V368.00H626.00" stroke="#2aa0e0" stroke-width="1" fill="none" opacity=".5"/>
<path d="M603.00 388.60H626.50V368.50" stroke="#01507c" stroke-width="1" fill="none" opacity=".6"/>
<rect x="608.00" y="377.40" width="13.00" height="2.00" rx="0.00" fill="#e8e8e8"/>
<rect x="613.50" y="371.90" width="2.00" height="13.00" rx="0.00" fill="#e8e8e8"/>
<rect x="628.00" y="369.50" width="4.30" height="17.00" rx="1.00" fill="#5e5e5e"/>
<rect x="633.50" y="368.70" width="35.50" height="18.00" rx="3.00" fill="#b5b5b5"/>
<text x="636.93" y="382.50" font-size="10.76" font-weight="normal" fill="#1e1e1e" textLength="27.51" lengthAdjust="spacingAndGlyphs" stroke="#1e1e1e" stroke-width=".3">100%</text>
<rect x="670.70" y="369.50" width="4.30" height="17.00" rx="1.00" fill="#5e5e5e"/>
<rect x="676.00" y="367.50" width="24.80" height="21.60" rx="2.00" fill="#027aba"/>
<path d="M676.50 388.10V368.00H699.80" stroke="#2aa0e0" stroke-width="1" fill="none" opacity=".5"/>
<path d="M677.00 388.60H700.30V368.50" stroke="#01507c" stroke-width="1" fill="none" opacity=".6"/>
<text x="684.57" y="383.85" font-size="13.81" font-weight="normal" fill="#d9d5d1" textLength="7.68" lengthAdjust="spacingAndGlyphs" stroke="#d9d5d1" stroke-width=".45">R</text>
<rect x="705.40" y="368.70" width="57.60" height="17.80" rx="3.00" fill="#8a8a8a"/>
<text x="738.81" y="382.50" font-size="11.05" font-weight="normal" fill="#1e1e1e" textLength="21.50" lengthAdjust="spacingAndGlyphs" stroke="#1e1e1e" stroke-width=".3">10.0</text>
<text x="765.00" y="382.80" font-size="12.06" font-weight="normal" fill="#d9d5d1" textLength="23.02" lengthAdjust="spacingAndGlyphs" stroke="#d9d5d1" stroke-width=".45">ACT:</text>
<rect x="789.00" y="368.70" width="58.00" height="17.80" rx="3.00" fill="#8a8a8a"/>
<text x="829.35" y="382.50" font-size="11.05" font-weight="normal" fill="#1e1e1e" textLength="15.36" lengthAdjust="spacingAndGlyphs" stroke="#1e1e1e" stroke-width=".3">0.0</text>
<rect x="495.00" y="396.00" width="11.70" height="11.50" rx="2.00" fill="#6a6a6a" stroke="#4a4a4a" stroke-width=".8"/>
<text x="512.00" y="407.00" font-size="13.81" font-weight="normal" fill="#d9d5d1" textLength="62.00" lengthAdjust="spacingAndGlyphs" stroke="#d9d5d1" stroke-width=".45">DWELL TIME:</text>
<rect x="578.00" y="393.00" width="60.00" height="17.30" rx="3.00" fill="#8a8a8a"/>
<text x="604.50" y="405.50" font-size="11.63" font-weight="normal" fill="#1e1e1e" textLength="6.51" lengthAdjust="spacingAndGlyphs" stroke="#1e1e1e" stroke-width=".3">0</text>
<rect x="644.00" y="396.00" width="11.70" height="11.50" rx="2.00" fill="#6a6a6a" stroke="#4a4a4a" stroke-width=".8"/>
<text x="661.00" y="407.00" font-size="13.81" font-weight="normal" fill="#d9d5d1" textLength="32.03" lengthAdjust="spacingAndGlyphs" stroke="#d9d5d1" stroke-width=".45">TOOL:</text>
<rect x="696.50" y="393.00" width="23.50" height="17.40" rx="3.00" fill="#8a8a8a"/>
<text x="705.00" y="405.50" font-size="11.63" font-weight="normal" fill="#1e1e1e" textLength="6.51" lengthAdjust="spacingAndGlyphs" stroke="#1e1e1e" stroke-width=".3">0</text>
<text x="724.00" y="407.00" font-size="13.81" font-weight="normal" fill="#d9d5d1" textLength="7.01" lengthAdjust="spacingAndGlyphs" stroke="#d9d5d1" stroke-width=".45">T</text>
<rect x="733.30" y="393.00" width="23.60" height="17.40" rx="3.00" fill="#b5b5b5"/>
<text x="742.00" y="405.50" font-size="11.63" font-weight="normal" fill="#1e1e1e" textLength="6.51" lengthAdjust="spacingAndGlyphs" stroke="#1e1e1e" stroke-width=".3">0</text>
<rect x="762.00" y="392.30" width="85.50" height="19.40" rx="2.00" fill="#027aba"/>
<path d="M762.50 410.70V392.80H846.50" stroke="#2aa0e0" stroke-width="1" fill="none" opacity=".5"/>
<path d="M763.00 411.20H847.00V393.30" stroke="#01507c" stroke-width="1" fill="none" opacity=".6"/>
<text x="766.00" y="406.70" font-size="13.37" font-weight="normal" fill="#d9d5d1" textLength="76.98" lengthAdjust="spacingAndGlyphs" stroke="#d9d5d1" stroke-width=".45">CHANGE TOOL</text>
<rect x="492.70" y="416.50" width="85.30" height="19.40" rx="2.50" fill="#78726e"/>
<rect x="494.00" y="417.80" width="82.70" height="16.80" rx="2.00" fill="#027aba"/>
<path d="M494.50 433.60V418.30H575.70" stroke="#2aa0e0" stroke-width="1" fill="none" opacity=".5"/>
<path d="M495.00 434.10H576.20V418.80" stroke="#01507c" stroke-width="1" fill="none" opacity=".6"/>
<text x="502.10" y="430.80" font-size="13.81" font-weight="normal" fill="#d9d5d1" textLength="66.48" lengthAdjust="spacingAndGlyphs" stroke="#d9d5d1" stroke-width=".45">SPINDLE CW</text>
<rect x="582.30" y="416.50" width="85.30" height="19.40" rx="2.50" fill="#78726e"/>
<rect x="583.60" y="417.80" width="82.70" height="16.80" rx="2.00" fill="#027aba"/>
<path d="M584.10 433.60V418.30H665.30" stroke="#2aa0e0" stroke-width="1" fill="none" opacity=".5"/>
<path d="M584.60 434.10H665.80V418.80" stroke="#01507c" stroke-width="1" fill="none" opacity=".6"/>
<text x="588.30" y="430.80" font-size="13.81" font-weight="normal" fill="#d9d5d1" textLength="73.10" lengthAdjust="spacingAndGlyphs" stroke="#d9d5d1" stroke-width=".45">SPINDLE CCW</text>
<rect x="672.00" y="416.50" width="85.30" height="19.40" rx="2.50" fill="#78726e"/>
<rect x="673.30" y="417.80" width="82.70" height="16.80" rx="2.00" fill="#027aba"/>
<path d="M673.80 433.60V418.30H755.00" stroke="#2aa0e0" stroke-width="1" fill="none" opacity=".5"/>
<path d="M674.30 434.10H755.50V418.80" stroke="#01507c" stroke-width="1" fill="none" opacity=".6"/>
<text x="702.00" y="430.80" font-size="13.81" font-weight="normal" fill="#d9d5d1" textLength="24.99" lengthAdjust="spacingAndGlyphs" stroke="#d9d5d1" stroke-width=".45">MIST</text>
<rect x="762.00" y="416.50" width="85.30" height="19.40" rx="2.50" fill="#78726e"/>
<rect x="763.30" y="417.80" width="82.70" height="16.80" rx="2.00" fill="#027aba"/>
<path d="M763.80 433.60V418.30H845.00" stroke="#2aa0e0" stroke-width="1" fill="none" opacity=".5"/>
<path d="M764.30 434.10H845.50V418.80" stroke="#01507c" stroke-width="1" fill="none" opacity=".6"/>
<text x="778.80" y="430.80" font-size="13.81" font-weight="normal" fill="#d9d5d1" textLength="51.89" lengthAdjust="spacingAndGlyphs" stroke="#d9d5d1" stroke-width=".45">COOLANT</text>
<rect x="492.70" y="439.60" width="85.30" height="19.40" rx="2.00" fill="#027aba"/>
<path d="M493.20 458.00V440.10H577.00" stroke="#2aa0e0" stroke-width="1" fill="none" opacity=".5"/>
<path d="M493.70 458.50H577.50V440.60" stroke="#01507c" stroke-width="1" fill="none" opacity=".6"/>
<text x="500.20" y="453.90" font-size="13.81" font-weight="normal" fill="#d9d5d1" textLength="70.72" lengthAdjust="spacingAndGlyphs" stroke="#d9d5d1" stroke-width=".45">GOTO PARK 1</text>
<rect x="582.30" y="439.60" width="85.30" height="19.40" rx="2.00" fill="#027aba"/>
<path d="M582.80 458.00V440.10H666.60" stroke="#2aa0e0" stroke-width="1" fill="none" opacity=".5"/>
<path d="M583.30 458.50H667.10V440.60" stroke="#01507c" stroke-width="1" fill="none" opacity=".6"/>
<text x="589.25" y="453.90" font-size="13.81" font-weight="normal" fill="#d9d5d1" textLength="71.27" lengthAdjust="spacingAndGlyphs" stroke="#d9d5d1" stroke-width=".45">GOTO PARK 2</text>
<rect x="672.00" y="439.60" width="85.30" height="19.40" rx="2.50" fill="#78726e"/>
<rect x="673.30" y="440.90" width="82.70" height="16.80" rx="2.00" fill="#027aba"/>
<path d="M673.80 456.70V441.40H755.00" stroke="#2aa0e0" stroke-width="1" fill="none" opacity=".5"/>
<path d="M674.30 457.20H755.50V441.90" stroke="#01507c" stroke-width="1" fill="none" opacity=".6"/>
<text x="704.60" y="453.90" font-size="13.81" font-weight="normal" fill="#d9d5d1" textLength="19.79" lengthAdjust="spacingAndGlyphs" stroke="#d9d5d1" stroke-width=".45">JSP</text>
<rect x="762.00" y="439.60" width="85.30" height="19.40" rx="2.00" fill="#027aba"/>
<path d="M762.50 458.00V440.10H846.30" stroke="#2aa0e0" stroke-width="1" fill="none" opacity=".5"/>
<path d="M763.00 458.50H846.80V440.60" stroke="#01507c" stroke-width="1" fill="none" opacity=".6"/>
<text x="786.30" y="453.90" font-size="13.81" font-weight="normal" fill="#d9d5d1" textLength="37.11" lengthAdjust="spacingAndGlyphs" stroke="#d9d5d1" stroke-width=".45">PROBE</text>
<rect x="492.70" y="463.40" width="85.30" height="19.40" rx="2.00" fill="#027aba"/>
<path d="M493.20 481.80V463.90H577.00" stroke="#2aa0e0" stroke-width="1" fill="none" opacity=".5"/>
<path d="M493.70 482.30H577.50V464.40" stroke="#01507c" stroke-width="1" fill="none" opacity=".6"/>
<text x="507.70" y="477.70" font-size="13.81" font-weight="normal" fill="#d9d5d1" textLength="55.28" lengthAdjust="spacingAndGlyphs" stroke="#d9d5d1" stroke-width=".45">LOAD FILE</text>
<rect x="582.30" y="463.40" width="85.30" height="19.40" rx="2.00" fill="#027aba"/>
<path d="M582.80 481.80V463.90H666.60" stroke="#2aa0e0" stroke-width="1" fill="none" opacity=".5"/>
<path d="M583.30 482.30H667.10V464.40" stroke="#01507c" stroke-width="1" fill="none" opacity=".6"/>
<text x="600.10" y="477.70" font-size="13.81" font-weight="normal" fill="#d9d5d1" textLength="49.50" lengthAdjust="spacingAndGlyphs" stroke="#d9d5d1" stroke-width=".45">EDIT FILE</text>
<rect x="672.00" y="463.40" width="85.30" height="19.40" rx="2.00" fill="#027aba"/>
<path d="M672.50 481.80V463.90H756.30" stroke="#2aa0e0" stroke-width="1" fill="none" opacity=".5"/>
<path d="M673.00 482.30H756.80V464.40" stroke="#01507c" stroke-width="1" fill="none" opacity=".6"/>
<text x="680.90" y="477.70" font-size="13.81" font-weight="normal" fill="#d9d5d1" textLength="68.20" lengthAdjust="spacingAndGlyphs" stroke="#d9d5d1" stroke-width=".45">REWIND FILE</text>
<rect x="762.00" y="463.40" width="85.30" height="19.40" rx="2.00" fill="#027aba"/>
<path d="M762.50 481.80V463.90H846.30" stroke="#2aa0e0" stroke-width="1" fill="none" opacity=".5"/>
<path d="M763.00 482.30H846.80V464.40" stroke="#01507c" stroke-width="1" fill="none" opacity=".6"/>
<text x="773.90" y="477.70" font-size="13.81" font-weight="normal" fill="#d9d5d1" textLength="62.30" lengthAdjust="spacingAndGlyphs" stroke="#d9d5d1" stroke-width=".45">CLOSE FILE</text>
<rect x="856.60" y="272.50" width="97.70" height="21.60" rx="2.50" fill="#78726e"/>
<rect x="857.90" y="273.80" width="95.10" height="19.00" rx="2.00" fill="#027aba"/>
<path d="M858.40 291.80V274.30H952.00" stroke="#2aa0e0" stroke-width="1" fill="none" opacity=".5"/>
<path d="M858.90 292.30H952.50V274.80" stroke="#01507c" stroke-width="1" fill="none" opacity=".6"/>
<text x="869.60" y="288.90" font-size="13.81" font-weight="normal" fill="#d9d5d1" textLength="71.88" lengthAdjust="spacingAndGlyphs" stroke="#d9d5d1" stroke-width=".45">CYCLE START</text>
<rect x="856.60" y="299.30" width="97.70" height="20.60" rx="2.50" fill="#78726e"/>
<rect x="857.90" y="300.60" width="95.10" height="18.00" rx="2.00" fill="#027aba"/>
<path d="M858.40 317.60V301.10H952.00" stroke="#2aa0e0" stroke-width="1" fill="none" opacity=".5"/>
<path d="M858.90 318.10H952.50V301.60" stroke="#01507c" stroke-width="1" fill="none" opacity=".6"/>
<text x="872.06" y="315.15" font-size="13.81" font-weight="normal" fill="#d9d5d1" textLength="66.76" lengthAdjust="spacingAndGlyphs" stroke="#d9d5d1" stroke-width=".45">SINGLE LINE</text>
<rect x="856.60" y="326.00" width="97.70" height="21.20" rx="2.50" fill="#78726e"/>
<rect x="857.90" y="327.30" width="95.10" height="18.60" rx="2.00" fill="#027aba"/>
<path d="M858.40 344.90V327.80H952.00" stroke="#2aa0e0" stroke-width="1" fill="none" opacity=".5"/>
<path d="M858.90 345.40H952.50V328.30" stroke="#01507c" stroke-width="1" fill="none" opacity=".6"/>
<text x="874.72" y="342.15" font-size="13.81" font-weight="normal" fill="#d9d5d1" textLength="61.44" lengthAdjust="spacingAndGlyphs" stroke="#d9d5d1" stroke-width=".45">FEED HOLD</text>
<rect x="856.60" y="368.90" width="98.00" height="21.90" rx="2.00" fill="#027aba"/>
<path d="M857.10 389.80V369.40H953.60" stroke="#2aa0e0" stroke-width="1" fill="none" opacity=".5"/>
<path d="M857.60 390.30H954.10V369.90" stroke="#01507c" stroke-width="1" fill="none" opacity=".6"/>
<text x="862.10" y="384.30" font-size="13.81" font-weight="normal" fill="#d9d5d1" textLength="87.20" lengthAdjust="spacingAndGlyphs" stroke="#d9d5d1" stroke-width=".45">RUN FROM HERE</text>
<rect x="856.60" y="395.20" width="97.70" height="21.80" rx="2.50" fill="#78726e"/>
<rect x="857.90" y="396.50" width="95.10" height="19.20" rx="2.00" fill="#027aba"/>
<path d="M858.40 414.70V397.00H952.00" stroke="#2aa0e0" stroke-width="1" fill="none" opacity=".5"/>
<path d="M858.90 415.20H952.50V397.50" stroke="#01507c" stroke-width="1" fill="none" opacity=".6"/>
<text x="866.30" y="410.80" font-size="13.81" font-weight="normal" fill="#d9d5d1" textLength="78.51" lengthAdjust="spacingAndGlyphs" stroke="#d9d5d1" stroke-width=".45">OFFLINE MODE</text>
<rect x="856.60" y="421.40" width="97.70" height="21.20" rx="2.50" fill="#78726e"/>
<rect x="857.90" y="422.70" width="95.10" height="18.60" rx="2.00" fill="#027aba"/>
<path d="M858.40 440.30V423.20H952.00" stroke="#2aa0e0" stroke-width="1" fill="none" opacity=".5"/>
<path d="M858.90 440.80H952.50V423.70" stroke="#01507c" stroke-width="1" fill="none" opacity=".6"/>
<text x="860.10" y="436.50" font-size="13.81" font-weight="normal" fill="#d9d5d1" textLength="90.89" lengthAdjust="spacingAndGlyphs" stroke="#d9d5d1" stroke-width=".45">OVERRIDE LIMITS</text>
<rect x="856.60" y="447.50" width="98.00" height="21.80" rx="2.00" fill="#027aba"/>
<path d="M857.10 468.30V448.00H953.60" stroke="#2aa0e0" stroke-width="1" fill="none" opacity=".5"/>
<path d="M857.60 468.80H954.10V448.50" stroke="#01507c" stroke-width="1" fill="none" opacity=".6"/>
<text x="872.60" y="463.20" font-size="13.81" font-weight="normal" fill="#d9d5d1" textLength="66.52" lengthAdjust="spacingAndGlyphs" stroke="#d9d5d1" stroke-width=".45">CYCLE STOP</text>
<text x="857.00" y="362.50" font-size="12.35" font-weight="normal" fill="#d9d5d1" textLength="26.01" lengthAdjust="spacingAndGlyphs" stroke="#d9d5d1" stroke-width=".45">LINE:</text>
<rect x="885.00" y="350.70" width="70.00" height="13.70" rx="3.00" fill="#b5b5b5"/>
<text x="917.00" y="362.20" font-size="11.92" font-weight="normal" fill="#1e1e1e" textLength="6.31" lengthAdjust="spacingAndGlyphs" stroke="#1e1e1e" stroke-width=".3">0</text>
<rect x="856.70" y="474.60" width="97.30" height="40.30" rx="4.00" fill="#c8181e"/>
<rect x="859.50" y="477.40" width="91.70" height="34.70" rx="2.50" fill="#ffee00"/>
<text x="880.50" y="501.50" font-size="18.17" font-weight="bold" fill="#d41818" textLength="48.99" lengthAdjust="spacingAndGlyphs">RESET</text>
<text x="591.90" y="21.00" font-size="9.59" font-weight="normal" fill="#e4e4e4" textLength="58.71" lengthAdjust="spacingAndGlyphs">Profile:Default</text>
<text x="591.90" y="33.50" font-size="10.47" font-weight="normal" fill="#e4e4e4" textLength="258.81" lengthAdjust="spacingAndGlyphs">File:E:\!USB_jo\UCCNC_software\probakódok\Leszorító.TXT</text>
<rect x="943.50" y="38.30" width="10.70" height="226.70" rx="0.00" fill="url(#sb)"/>
<rect x="943.50" y="38.30" width="10.70" height="6.50" rx="0.00" fill="#f6f6f6"/>
<path d="M946.5 43L949 40.2L951.5 43Z" fill="#111"/>
<rect x="945.00" y="45.50" width="8.00" height="12.00" rx="1.00" fill="#f0f0f0" stroke="#aaa" stroke-width=".6"/>
<rect x="947.50" y="49.00" width="3.00" height="4.50" rx="0.00" fill="#9a9a9a"/>
<rect x="943.50" y="258.00" width="10.70" height="7.00" rx="0.00" fill="#f6f6f6"/>
<path d="M946.5 260.5L949 263.2L951.5 260.5Z" fill="#111"/>
<rect x="588.00" y="144.20" width="355.50" height="13.80" rx="0.00" fill="#000066"/>
<text x="592.3" y="155.00" font-size="11" fill="#e8e8e8"><tspan fill="#f01414">N25</tspan>G0Z25.4</text>
<text x="592.3" y="168.34" font-size="11" fill="#e8e8e8"><tspan fill="#f01414">N30</tspan>G0X0Y0</text>
<text x="592.3" y="181.68" font-size="11" fill="#e8e8e8"><tspan fill="#f01414">N35</tspan>G0X0.Y0.T1M6</text>
<text x="592.3" y="195.02" font-size="11" fill="#e8e8e8"><tspan fill="#f01414">N40</tspan>X3.697Y44.007S20000M3</text>
<text x="592.3" y="208.36" font-size="11" fill="#e8e8e8"><tspan fill="#f01414">N50</tspan>Z2.54</text>
<text x="592.3" y="221.70" font-size="11" fill="#e8e8e8"><tspan fill="#f01414">N55</tspan>G1Z-2.0F900.</text>
<text x="592.3" y="235.04" font-size="11" fill="#e8e8e8"><tspan fill="#f01414">N60</tspan>X3.3</text>
<text x="592.3" y="248.38" font-size="11" fill="#e8e8e8"><tspan fill="#f01414">N65</tspan>G3X4.0Y43.307I0.7J0.F450.</text>
<text x="592.3" y="261.72" font-size="11" fill="#e8e8e8"><tspan fill="#f01414">N70</tspan>G1X6.0F900.</text>
<path d="M572.5 16.2L582.1 23V31.6L572.5 38.3L563 31.6V23Z" fill="#e0101c"/>
<path d="M567.8 32.6L564.9 30.6V24L572.5 18.8L576.3 21.4V27.4L570.6 29.8V35L572.5 36.3L580.1 31V24.2L578 22.8" fill="none" stroke="#fff" stroke-width="1.2" stroke-linejoin="miter"/>
<path d="M565.4 48.5V44.4H569.5 M575.3 44.4H579.3V48.5 M579.3 54.5V58.5H575.3 M569.5 58.5H565.4V54.5" fill="none" stroke="#dcdcdc" stroke-width="1.8"/>
<circle cx="572.5" cy="72.7" r="7" fill="none" stroke="#dcdcdc" stroke-width="1.7"/>
<line x1="568.30" y1="72.70" x2="576.70" y2="72.70" stroke="#dcdcdc" stroke-width="1.80"/>
<line x1="572.50" y1="68.50" x2="572.50" y2="76.90" stroke="#dcdcdc" stroke-width="1.80"/>
<circle cx="572.5" cy="93.2" r="7" fill="none" stroke="#dcdcdc" stroke-width="1.7"/>
<line x1="568.30" y1="93.20" x2="576.70" y2="93.20" stroke="#dcdcdc" stroke-width="1.80"/>
<path d="M569.4 105.3V111H564.3 M575.6 105.3V111H580.7 M564.3 116.5H569.4V121.6 M580.7 116.5H575.6V121.6" fill="none" stroke="#dcdcdc" stroke-width="1.7"/>
<circle cx="572.5" cy="113.8" r="2.2" fill="#dcdcdc"/>
<path d="M572.5 126.00L580.5 131.10L572.5 134.30L564.5 131.10Z" fill="#1b9ae0"/>
<path d="M564.2 132.10L572 135.40V142.40L564.2 139.20Z" fill="#1b9ae0"/>
<path d="M580.8 132.10L573 135.40V142.40L580.8 139.20Z" fill="#7e7e7e"/>
<path d="M572.5 146.90L580.5 152.00L572.5 155.20L564.5 152.00Z" fill="#7e7e7e"/>
<path d="M564.2 153.00L572 156.30V163.30L564.2 160.10Z" fill="#7e7e7e"/>
<path d="M580.8 153.00L573 156.30V163.30L580.8 160.10Z" fill="#1b9ae0"/>
<path d="M572.5 167.50L580.5 172.60L572.5 175.80L564.5 172.60Z" fill="#7e7e7e"/>
<path d="M564.2 173.60L572 176.90V183.90L564.2 180.70Z" fill="#1b9ae0"/>
<path d="M580.8 173.60L573 176.90V183.90L580.8 180.70Z" fill="#7e7e7e"/>
<path d="M572.5 187.80L580.5 192.90L572.5 196.10L564.5 192.90Z" fill="#1b9ae0"/>
<path d="M564.2 193.90L572 197.20V204.20L564.2 201.00Z" fill="#7e7e7e"/>
<path d="M580.8 193.90L573 197.20V204.20L580.8 201.00Z" fill="#7e7e7e"/>
<text x="564.00" y="219.80" font-size="12.79" font-weight="normal" fill="#dcdcdc" textLength="17.58" lengthAdjust="spacingAndGlyphs">ISO</text>
<rect x="563.40" y="227.40" width="18.80" height="15.50" rx="1.50" fill="#0a78c0" stroke="#22e022" stroke-width="1.3"/>
<text x="569.80" y="235.70" font-size="7.85" font-weight="bold" fill="#b8d8f0" textLength="5.39" lengthAdjust="spacingAndGlyphs">M</text>
<path d="M566.3 236.3V238.9 M566.3 237.6H578.8 M578.8 236.3V238.9" stroke="#b8d8f0" stroke-width=".8" fill="none"/>
<text x="561.00" y="256.60" font-size="9.59" font-weight="normal" fill="#dcdcdc" textLength="23.89" lengthAdjust="spacingAndGlyphs">Reload</text>
<g shape-rendering="crispEdges">
<path d="M157.60 134.10 L160.00 130.50 L188.50 122.20 L191.50 122.00 L194.00 123.20 L208.30 138.20 L212.00 137.20 L223.20 135.80 L232.00 137.50 L237.00 141.00 L240.00 145.00 L253.90 159.60 L256.00 161.20 L259.50 162.40 L269.40 173.00 L266.00 175.20 L253.90 178.60 L251.00 181.50 L251.30 184.50 L255.20 187.70 L263.40 188.10 L300.60 175.20 L305.80 170.40 L310.60 169.30 L316.20 170.20 L320.00 173.60 L320.00 178.20 L316.00 181.00 L311.00 182.00 L306.70 181.20 L253.90 200.30 L241.70 201.60 L228.60 197.50 L214.00 192.00 L208.00 186.50 L195.80 176.70 L157.60 134.10" fill="none" stroke="#2862ac" stroke-width="1.00" stroke-linejoin="round"/>
<path d="M320.00 143.30 L320.00 146.70 L324.00 150.50 L327.50 152.50 L345.00 147.20 L349.50 147.80 L368.30 166.30 L368.30 169.30 L366.00 171.30 L333.00 182.50 L329.00 184.50 L325.00 183.80 L318.00 185.80 L315.00 190.50 L317.50 195.80 L324.00 197.40 L330.00 196.00 L334.00 193.00 L389.40 173.00 L392.30 168.50 L392.30 164.00 L385.00 134.20 L382.50 130.00 L344.20 90.00 L330.00 73.50 L325.50 73.80 L293.75 85.60 L304.80 98.00 L311.70 105.60 L309.00 106.80 L299.00 110.30 L296.40 114.00 L296.40 119.90 L309.60 133.60 L312.80 134.20 L319.70 140.50 L320.00 143.30" fill="none" stroke="#2862ac" stroke-width="1.00" stroke-linejoin="round"/>
<path d="M322.3 126.7 L353.5 116.3 A4.2 4.2 0 0 1 358 124 L326.5 134.7 A4.2 4.2 0 0 1 322.3 126.7 Z" fill="none" stroke="#2862ac" stroke-width="1"/>
<path d="M207.5 167.3 L239.5 157.8 A3.6 3.6 0 0 1 242.8 164.8 L211 174.3 A3.6 3.6 0 0 1 207.5 167.3 Z" fill="none" stroke="#2862ac" stroke-width="1"/>
<ellipse shape-rendering="auto" cx="182.3" cy="136.7" rx="6" ry="1.9" transform="rotate(-22 182.3 136.7)" fill="none" stroke="#2862ac" stroke-width="1"/>
<ellipse shape-rendering="auto" cx="318.8" cy="88" rx="6" ry="2" transform="rotate(-22 318.8 88)" fill="none" stroke="#2862ac" stroke-width="1"/>
<path d="M178.30 62.50 L178.30 125.80" fill="none" stroke="#e00000" stroke-width="1.00" stroke-linejoin="round"/>
<path d="M178.30 125.80 L178.30 136.60" fill="none" stroke="#b05aa0" stroke-width="1.00" stroke-linejoin="round"/>
<path d="M178.30 62.50 L208.30 92.80" fill="none" stroke="#b00000" stroke-width="1.00" stroke-linejoin="round"/>
<path d="M178.30 62.50 L244.20 147.50" fill="none" stroke="#b00000" stroke-width="1.00" stroke-linejoin="round"/>
<path d="M208.30 92.80 L208.30 156.70" fill="none" stroke="#e00000" stroke-width="1.00" stroke-linejoin="round"/>
<path d="M208.30 156.70 L208.30 168.50" fill="none" stroke="#b05aa0" stroke-width="1.00" stroke-linejoin="round"/>
<path d="M208.30 92.80 L259.70 96.60 L310.70 99.40 L325.50 114.60" fill="none" stroke="#b00000" stroke-width="1.00" stroke-linejoin="round"/>
<path d="M260.10 86.00 L316.30 14.20" fill="none" stroke="#b00000" stroke-width="1.00" stroke-linejoin="round"/>
<path d="M260.10 86.00 L260.00 149.00" fill="none" stroke="#e00000" stroke-width="1.00" stroke-linejoin="round"/>
<path d="M260.00 149.00 L259.60 162.40" fill="none" stroke="#2862ac" stroke-width="1.00" stroke-linejoin="round"/>
<path d="M260.10 86.00 L318.90 70.20" fill="none" stroke="#b00000" stroke-width="1.00" stroke-linejoin="round"/>
<path d="M316.30 14.20 L316.50 77.90" fill="none" stroke="#e00000" stroke-width="1.00" stroke-linejoin="round"/>
<path d="M316.50 77.90 L317.50 88.00" fill="none" stroke="#2862ac" stroke-width="1.00" stroke-linejoin="round"/>
<path d="M316.30 14.20 L325.80 56.70" fill="none" stroke="#b00000" stroke-width="1.00" stroke-linejoin="round"/>
<path d="M325.80 56.70 L325.80 114.60" fill="none" stroke="#ff1010" stroke-width="1.60" stroke-linejoin="round"/>
<path d="M325.80 114.60 L325.80 134.00" fill="none" stroke="#e00000" stroke-width="1.20" stroke-linejoin="round"/>
<path d="M324.50 114.00 L324.50 179.20" fill="none" stroke="#e00000" stroke-width="1.00" stroke-linejoin="round"/>
<path d="M324.50 179.20 L324.50 190.80" fill="none" stroke="#2862ac" stroke-width="1.00" stroke-linejoin="round"/>
<path d="M318.90 70.20 L319.30 142.00" fill="none" stroke="#e00000" stroke-width="1.00" stroke-linejoin="round"/>
<path d="M318.90 70.20 L245.00 218.30" fill="none" stroke="#b00000" stroke-width="1.00" stroke-linejoin="round"/>
<path d="M310.70 99.40 L310.50 163.80" fill="none" stroke="#e00000" stroke-width="1.00" stroke-linejoin="round"/>
<path d="M310.50 163.80 L310.50 175.40" fill="none" stroke="#2862ac" stroke-width="1.00" stroke-linejoin="round"/>
<path d="M142.00 139.20 L153.00 135.80" fill="none" stroke="#c8c8c8" stroke-width="0.80" stroke-linejoin="round"/>
<path d="M147.50 137.00 L235.00 229.20" fill="none" stroke="#c8c8c8" stroke-width="0.90" stroke-linejoin="round"/>
<path d="M229.20 231.70 L240.80 227.50" fill="none" stroke="#c8c8c8" stroke-width="0.80" stroke-linejoin="round"/>
<path d="M240.50 158.30 L240.50 234.20" fill="none" stroke="#c8c8c8" stroke-width="0.90" stroke-linejoin="round"/>
<path d="M235.00 160.00 L245.80 157.50" fill="none" stroke="#c8c8c8" stroke-width="0.80" stroke-linejoin="round"/>
<path d="M234.20 237.50 L246.70 232.50" fill="none" stroke="#c8c8c8" stroke-width="0.80" stroke-linejoin="round"/>
<path d="M245.00 230.00 L420.00 170.80" fill="none" stroke="#c8c8c8" stroke-width="0.90" stroke-linejoin="round"/>
<path d="M245.80 228.30 L251.70 234.20" fill="none" stroke="#c8c8c8" stroke-width="0.80" stroke-linejoin="round"/>
<path d="M418.30 167.00 L424.20 174.20" fill="none" stroke="#c8c8c8" stroke-width="0.80" stroke-linejoin="round"/>
<path d="M239.2 130.8 A5.5 2.6 0 0 1 250.2 130.8 L244.4 147.6 Z" fill="#f0ec00"/>
<ellipse cx="244.7" cy="131" rx="5.5" ry="2.6" fill="#f8f400"/>
<path d="M239.2 200.8 A5.5 2.6 0 0 1 250.2 200.8 L245 218.4 Z" fill="#20c0c8"/>
<ellipse cx="244.7" cy="201" rx="5.5" ry="2.6" fill="#30d0d8"/>
<text transform="translate(118.00 148.30) rotate(-21.0) scale(1.00 1)" font-size="9.30" font-style="italic" fill="#18c818" text-anchor="middle" dominant-baseline="central">48.8070</text>
<text transform="translate(185.00 185.30) rotate(227.0) scale(1.00 1)" font-size="9.30" font-style="italic" fill="#18c818" text-anchor="middle" dominant-baseline="central">49.5598</text>
<text transform="translate(211.50 170.50) rotate(-22.0) scale(1.00 1)" font-size="9.50" font-style="italic" fill="#3278c8" text-anchor="middle" dominant-baseline="central">25.4000</text>
<text transform="translate(233.50 199.50) rotate(-90.0) scale(1.00 1)" font-size="9.00" font-style="italic" fill="#3278c8" text-anchor="middle" dominant-baseline="central">21.4000</text>
<text transform="translate(207.50 239.50) rotate(-20.0) scale(1.00 1)" font-size="9.30" font-style="italic" fill="#18c818" text-anchor="middle" dominant-baseline="central">-0.7928</text>
<text transform="translate(211.50 245.30) rotate(-20.0) scale(1.00 1)" font-size="9.30" font-style="italic" fill="#3278c8" text-anchor="middle" dominant-baseline="central">-2.0000</text>
<text transform="translate(264.50 248.00) rotate(230.0) scale(1.00 1)" font-size="9.30" font-style="italic" fill="#d80c0c" text-anchor="middle" dominant-baseline="central">0.8000</text>
<text transform="translate(337.50 204.00) rotate(-20.0) scale(1.00 1)" font-size="9.30" font-style="italic" fill="#d80c0c" text-anchor="middle" dominant-baseline="central">56.8000</text>
<text transform="translate(437.50 188.00) rotate(228.0) scale(1.00 1)" font-size="9.30" font-style="italic" fill="#d80c0c" text-anchor="middle" dominant-baseline="central">55.8000</text>
<path d="M60 220.8 L51 210" stroke="#10a010" stroke-width="3.2" stroke-linecap="round"/>
<path d="M43.7 202.5 L55.5 207 L48 213.8 Z" fill="#12f012"/>
<path d="M60 220.8 L77 214.5" stroke="#d00000" stroke-width="3.2" stroke-linecap="round"/>
<path d="M88.8 208.7 L74.5 208.8 L78.5 218.2 Z" fill="#ff1010"/>
<path d="M60.2 220.8 V204" stroke="#3a7ec4" stroke-width="3.6"/>
<path d="M60.2 194.2 L55.1 204.6 H65.3 Z" fill="#3c9cf0" stroke="#3c9cf0" stroke-width=".8" stroke-linejoin="round"/>
<path d="M57.5 185 H63.3 L57.5 192.2 H63.3" fill="none" stroke="#2a6ab0" stroke-width=".9" transform="skewX(-12) translate(40 0)"/>
<path d="M35.5 198 L39.5 199 M39.5 199 L41.3 196.3 M39.5 199 L42.5 201" fill="none" stroke="#14c014" stroke-width=".9"/>
<path d="M89.8 206.5 L98.7 209.3 M93.2 204.6 L95.3 211.2" fill="none" stroke="#c01010" stroke-width=".9"/>
</g>
</svg></body></html>
